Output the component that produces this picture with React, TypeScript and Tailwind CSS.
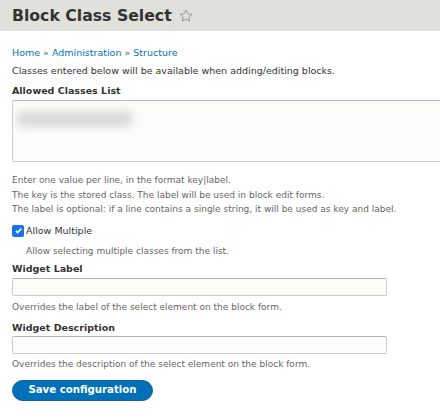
import React from 'react';

const font = { fontFamily: '"DejaVu Sans", Verdana, sans-serif' };

const Help = ({ children }: { children: React.ReactNode }) => (
  <div className="text-[9px] leading-[14.5px] text-[#666]">{children}</div>
);

const App = () => {
  return (
    <div className="w-[440px] h-[418px] overflow-hidden bg-white text-[#333]" style={font}>
      <div className="h-[31px] bg-[#e1e1db] flex items-center px-3 gap-[7px]">
        <h1 className="text-[15.7px] font-bold text-[#333] leading-none">Block Class Select</h1>
        <svg width="14" height="14" viewBox="0 0 24 24" fill="none" stroke="#888" strokeWidth="1.4" strokeLinejoin="round">
          <path d="M12 1.5l3.1 6.6 7 .8-5.3 4.8 1.5 7L12 17.2l-6.3 3.5 1.5-7L1.9 8.9l7-.8z" />
        </svg>
      </div>

      <div className="px-3 pt-[14px]">
        <nav className="text-[9.5px] leading-[15px] text-[#0074bd]">
          Home <span className="text-[#666]">»</span> Administration <span className="text-[#666]">»</span> Structure
        </nav>
        <p className="text-[9.5px] leading-[15px] mt-[3px]">Classes entered below will be available when adding/editing blocks.</p>

        <div className="mt-[6px]">
          <label className="block text-[9.5px] font-bold leading-[14px]">Allowed Classes List</label>
          <div className="mt-[2px] mr-[-20px] h-[62px] border border-[#ccc] border-t-[#b4b4b4] bg-[#fcfcfa] rounded-[2px] px-1 pt-[10px]">
            <div className="w-[115px] h-[16px] bg-[#dadada] blur-[4px]" />
          </div>
          <div className="mt-[11px]">
            <Help>Enter one value per line, in the format key|label.</Help>
            <Help>The key is the stored class. The label will be used in block edit forms.</Help>
            <Help>The label is optional: if a line contains a single string, it will be used as key and label.</Help>
          </div>
        </div>

        <div className="mt-[7px]">
          <label className="flex items-center gap-[2px] text-[9.5px] leading-[14px]">
            <span className="w-[12px] h-[12px] rounded-[2px] bg-[#1a73e8] flex items-center justify-center">
              <svg width="9" height="9" viewBox="0 0 12 12" fill="none" stroke="white" strokeWidth="2">
                <path d="M2.5 6.5l2.3 2.3L9.7 3.5" />
              </svg>
            </span>
            Allow Multiple
          </label>
          <div className="pl-[14px] mt-[6px]">
            <Help>Allow selecting multiple classes from the list.</Help>
          </div>
        </div>

        <div className="mt-[4px]">
          <label className="block text-[9.5px] font-bold leading-[14px]">Widget Label</label>
          <div className="mt-[2px] w-[375px] h-[18px] border border-[#ccc] border-t-[#b4b4b4] bg-[#fcfcfa] rounded-[2px]" />
          <div className="mt-[4px]">
            <Help>Overrides the label of the select element on the block form.</Help>
          </div>
        </div>

        <div className="mt-[6px]">
          <label className="block text-[9.5px] font-bold leading-[14px]">Widget Description</label>
          <div className="mt-[1px] w-[375px] h-[18px] border border-[#ccc] border-t-[#b4b4b4] bg-[#fcfcfa] rounded-[2px]" />
          <div className="mt-[3px]">
            <Help>Overrides the description of the select element on the block form.</Help>
          </div>
        </div>

        <button className="mt-[9px] h-[21px] w-[141px] rounded-full bg-[#0071b8] border border-[#1e5c90] text-white text-[10.2px] font-bold leading-none">
          Save configuration
        </button>
      </div>
    </div>
  );
};

export default App;
